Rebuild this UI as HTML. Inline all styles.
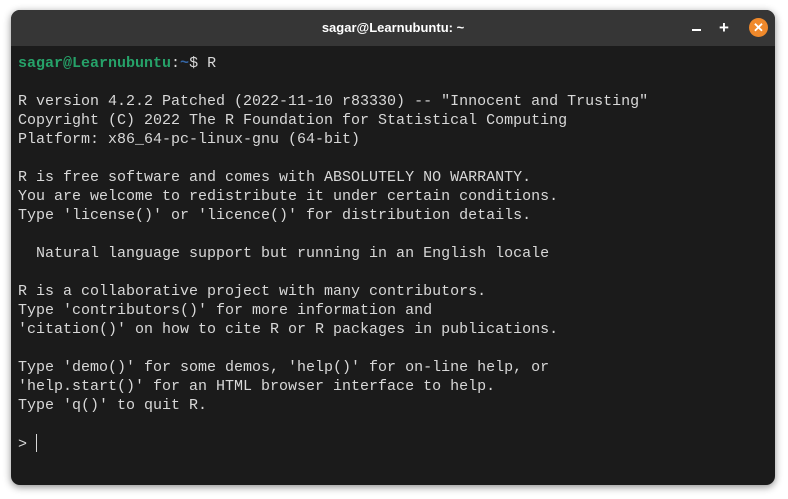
<!DOCTYPE html>
<html><head><style>
html,body{margin:0;padding:0;background:#fff;width:788px;height:499px;overflow:hidden}
.win{position:absolute;left:11px;top:10px;width:764px;height:475px;border-radius:9px;overflow:hidden;background:#1b1b1b;box-shadow:0 2px 8px rgba(0,0,0,.45)}
.tb{height:36px;background:#363636;position:relative;font-family:"Liberation Sans",sans-serif;color:#fff;font-weight:bold;font-size:13px;text-align:center;line-height:36px}
.min{position:absolute;left:681px;top:19px;width:9px;height:2px;background:#fff}
.plus{position:absolute;left:708px;top:0;font-size:17px}
.close{position:absolute;left:738px;top:8px;width:19px;height:19px;border-radius:50%;background:#f0892b;color:#fff;font-size:13px;line-height:19px;text-align:center}
pre{margin:0;padding:8px 0 0 7px;font-family:"Liberation Mono",monospace;font-size:15px;line-height:19px;color:#d8d8d8}
.g{color:#26a269;font-weight:bold}.b{color:#3465a4;font-weight:bold}
.cur{display:inline-block;width:1px;height:18px;background:#d8d8d8;vertical-align:-4px}
</style></head><body>
<div class="win">
<div class="tb">sagar@Learnubuntu: ~<div class="min"></div><div class="plus">+</div><div class="close">✕</div></div>
<pre><span class="g">sagar@Learnubuntu</span>:<span class="b">~</span>$ R

R version 4.2.2 Patched (2022-11-10 r83330) -- "Innocent and Trusting"
Copyright (C) 2022 The R Foundation for Statistical Computing
Platform: x86_64-pc-linux-gnu (64-bit)

R is free software and comes with ABSOLUTELY NO WARRANTY.
You are welcome to redistribute it under certain conditions.
Type 'license()' or 'licence()' for distribution details.

  Natural language support but running in an English locale

R is a collaborative project with many contributors.
Type 'contributors()' for more information and
'citation()' on how to cite R or R packages in publications.

Type 'demo()' for some demos, 'help()' for on-line help, or
'help.start()' for an HTML browser interface to help.
Type 'q()' to quit R.

&gt; <span class="cur"></span></pre>
</div>
</body></html>
